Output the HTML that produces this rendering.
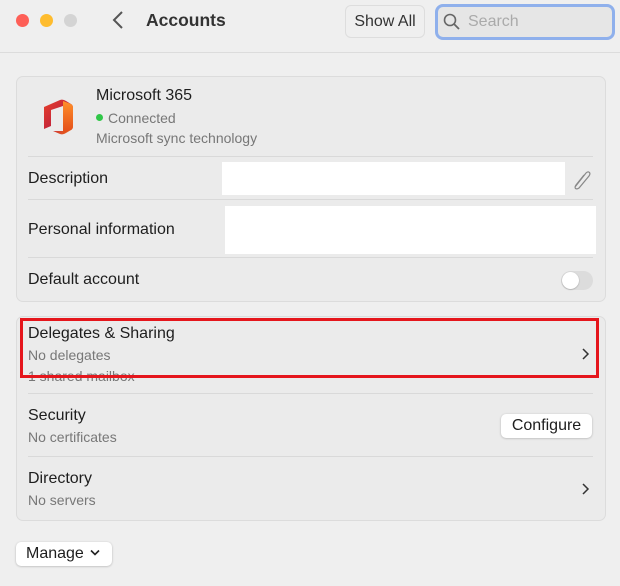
<!DOCTYPE html>
<html><head><meta charset="utf-8"><style>
*{margin:0;padding:0;box-sizing:border-box}
body{width:620px;height:586px;background:#efefef;font-family:"Liberation Sans",sans-serif;position:relative;overflow:hidden;color:#1e1e1e}
.a{position:absolute;white-space:nowrap}
.t{font-size:16px}
.s{font-size:14px;color:#777}
.panel{position:absolute;left:16px;width:590px;background:#ebebeb;border:1px solid #dcdcdc;border-radius:7px}
.sep{position:absolute;left:28px;width:565px;height:1px;background:#d9d9d9}
.btn{position:absolute;background:#fff;border-radius:5px;box-shadow:0 0.5px 2px rgba(0,0,0,.25);font-size:16px;text-align:center}
</style></head><body>
<div class="a" style="left:16px;top:14px;width:13px;height:13px;border-radius:50%;background:#fe5f57"></div>
<div class="a" style="left:40px;top:14px;width:13px;height:13px;border-radius:50%;background:#febc2e"></div>
<div class="a" style="left:64px;top:14px;width:13px;height:13px;border-radius:50%;background:#d4d4d4"></div>
<svg class="a" style="left:111px;top:10px" width="14" height="20"><path d="M11 2 L3 10 L11 18" fill="none" stroke="#555" stroke-width="2"/></svg>
<div class="a" style="left:146px;top:10px;font-size:17.5px;font-weight:bold;color:#333">Accounts</div>
<div class="a" style="left:345px;top:5px;width:80px;height:33px;border:1px solid #ddd;border-radius:6px;background:#efefef;font-size:16px;line-height:31px;text-align:center;color:#333">Show All</div>
<div class="a" style="left:435px;top:4px;width:180px;height:36px;border:3px solid #8fb0ec;border-radius:8px;background:#e6e6e6"></div>
<svg class="a" style="left:443px;top:13px" width="18" height="18"><circle cx="7" cy="7" r="5.5" fill="none" stroke="#666" stroke-width="1.6"/><path d="M11 11 L16 16" stroke="#666" stroke-width="1.8"/></svg>
<div class="a" style="left:468px;top:13px;font-size:16px;color:#aaa">Search</div>
<div class="a" style="left:0;top:52px;width:620px;height:1px;background:#dcdcdc"></div>

<div class="panel" style="top:76px;height:226px"></div>
<svg class="a" style="left:42px;top:98px" width="32" height="38" viewBox="0 0 32 38">
<defs><linearGradient id="g" x1="0" y1="0" x2="1" y2="1"><stop offset="0" stop-color="#e8402a"/><stop offset="0.5" stop-color="#c4263a"/><stop offset="1" stop-color="#f0701a"/></linearGradient>
<linearGradient id="g2" x1="0" y1="0" x2="0" y2="1"><stop offset="0" stop-color="#ff8f2a"/><stop offset="1" stop-color="#e34d1a"/></linearGradient></defs>
<path d="M2 9 L18 2 Q21 1 24 3 L29 6 Q31 7 31 10 L31 28 Q31 31 29 32 L24 35 Q21 37 18 36 L11 33 L21 33 L21 8 L9 12 L9 28 L2 31 Z" fill="url(#g)"/>
<path d="M21 3 L29 6 Q31 7 31 10 L31 28 Q31 31 29 32 L21 35 Z" fill="url(#g2)"/>
</svg>
<div class="a t" style="left:96px;top:87px">Microsoft 365</div>
<div class="a" style="left:96px;top:114px;width:7px;height:7px;border-radius:50%;background:#30c748"></div>
<div class="a s" style="left:108px;top:110px">Connected</div>
<div class="a s" style="left:96px;top:130px">Microsoft sync technology</div>
<div class="sep" style="top:156px"></div>
<div class="a t" style="left:28px;top:170px">Description</div>
<div class="a" style="left:222px;top:162px;width:343px;height:33px;background:#fff"></div>
<svg class="a" style="left:571px;top:168px" width="20" height="22"><path d="M4 19 L15 5 Q17 3 18.5 4.5 Q19.5 6 18 8 L8 20 Q6 21.5 4.5 20.5 Q3.5 19 5 17 L13 7" fill="none" stroke="#888" stroke-width="1.2"/></svg>
<div class="sep" style="top:199px"></div>
<div class="a t" style="left:28px;top:221px">Personal information</div>
<div class="a" style="left:225px;top:206px;width:371px;height:48px;background:#fff"></div>
<div class="sep" style="top:257px"></div>
<div class="a t" style="left:28px;top:271px">Default account</div>
<div class="a" style="left:561px;top:271px;width:32px;height:19px;border-radius:10px;background:#dcdcdc"></div>
<div class="a" style="left:562px;top:272px;width:17px;height:17px;border-radius:50%;background:#fff;box-shadow:0 0.5px 1.5px rgba(0,0,0,.3)"></div>

<div class="panel" style="top:316px;height:205px"></div>
<div class="a t" style="left:28px;top:325px">Delegates &amp; Sharing</div>
<div class="a s" style="left:28px;top:347px">No delegates</div>
<div class="a s" style="left:28px;top:368px">1 shared mailbox</div>
<svg class="a" style="left:581px;top:347px" width="10" height="14"><path d="M2 2 L7 7 L2 12" fill="none" stroke="#333" stroke-width="1.5"/></svg>
<div class="a" style="left:20px;top:318px;width:579px;height:60px;border:3px solid #e5161c"></div>
<div class="sep" style="top:393px"></div>
<div class="a t" style="left:28px;top:407px">Security</div>
<div class="a s" style="left:28px;top:429px">No certificates</div>
<div class="btn" style="left:501px;top:414px;width:91px;height:24px;line-height:23px">Configure</div>
<div class="sep" style="top:456px"></div>
<div class="a t" style="left:28px;top:470px">Directory</div>
<div class="a s" style="left:28px;top:492px">No servers</div>
<svg class="a" style="left:581px;top:482px" width="10" height="14"><path d="M2 2 L7 7 L2 12" fill="none" stroke="#333" stroke-width="1.5"/></svg>

<div class="btn" style="left:16px;top:542px;width:96px;height:24px;line-height:23px;text-align:left;padding-left:10px">Manage <svg width="10" height="8" style="vertical-align:1px;margin-left:2px"><path d="M1 1.5 L5 5.5 L9 1.5" fill="none" stroke="#222" stroke-width="1.6"/></svg></div>
</body></html>
